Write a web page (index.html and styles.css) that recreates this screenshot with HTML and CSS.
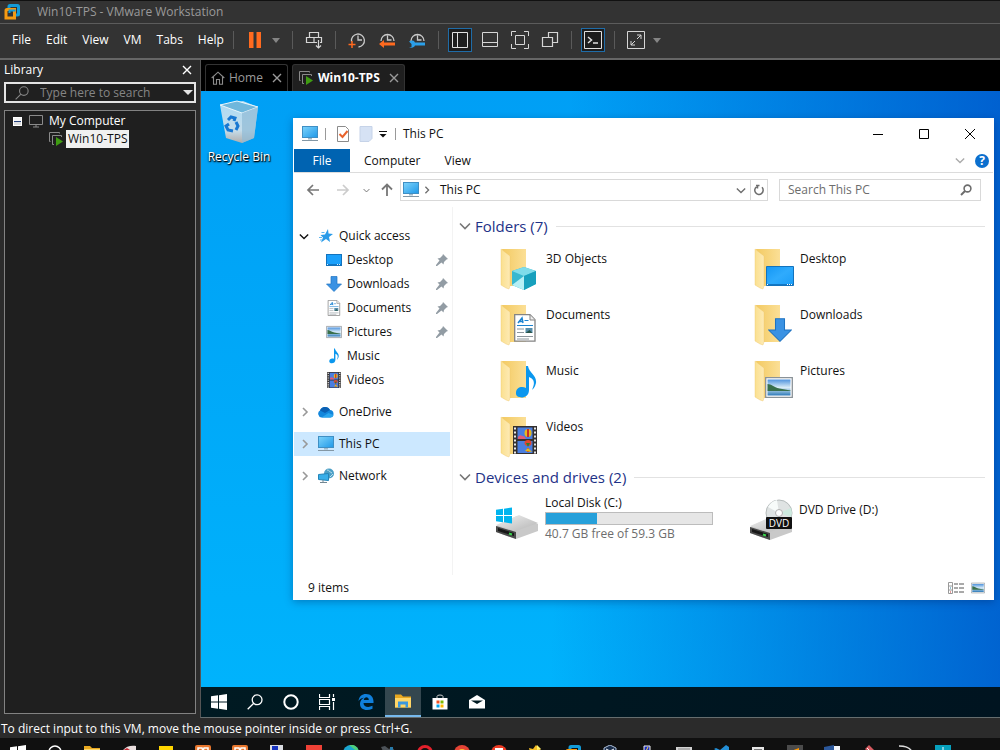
FILE: index.html
```
<!DOCTYPE html>
<html lang="en">
<head>
  <meta charset="UTF-8">
  <meta name="viewport" content="width=device-width, initial-scale=1.0">
  <title>Win10-TPS - VMware Workstation</title>
  <link rel="stylesheet" href="styles.css">
</head>
<body>
  <!-- shared icons -->
  <svg class="sprite" aria-hidden="true">
    <defs>
      <linearGradient id="gScreen" x1="0" y1="0" x2="1" y2="1"><stop offset="0" stop-color="#7fd4fb"/><stop offset="1" stop-color="#1f98e8"/></linearGradient>
      <linearGradient id="gDesk" x1="0" y1="0" x2="1" y2="1"><stop offset="0" stop-color="#1497f5"/><stop offset="0.5" stop-color="#2fabfd"/><stop offset="1" stop-color="#1a9df8"/></linearGradient>
      <linearGradient id="gFolder" x1="0" y1="0" x2="1" y2="0"><stop offset="0" stop-color="#f3ca62"/><stop offset="1" stop-color="#fbdf96"/></linearGradient>
      <linearGradient id="gFlap" x1="0" y1="0" x2="1" y2="0"><stop offset="0" stop-color="#fbe08f"/><stop offset="1" stop-color="#fdeab5"/></linearGradient>
      <linearGradient id="gPhoto" x1="0" y1="0" x2="0" y2="1"><stop offset="0" stop-color="#4f93dd"/><stop offset="0.5" stop-color="#d9ecf7"/><stop offset="1" stop-color="#2c79b8"/></linearGradient>
      <linearGradient id="gDrive" x1="0" y1="0" x2="1" y2="1"><stop offset="0" stop-color="#f2f2f2"/><stop offset="1" stop-color="#b4b4b4"/></linearGradient>
      <linearGradient id="gBin" x1="0" y1="0" x2="0" y2="1"><stop offset="0" stop-color="#b4ddf4"/><stop offset="0.7" stop-color="#cfe0ea"/><stop offset="1" stop-color="#b9aea8"/></linearGradient>
    </defs>
    <symbol id="pc" viewBox="0 0 16 16">
      <rect x="0.5" y="0.5" width="15" height="11" fill="url(#gScreen)" stroke="#3f8fc4"/>
      <path d="M6 12h4v1.500H6z" fill="#9fb8c8"/><path d="M0 14.500h16" stroke="#8397a5"/>
    </symbol>
    <symbol id="folder" viewBox="0 0 40 44">
      <path d="M2 2h24v37H10z" fill="url(#gFolder)"/>
      <path d="M1 2l9 7v30l-1 3-3-1-5-3z" fill="url(#gFlap)" stroke="#edc569" stroke-width="0.400"/>
    </symbol>
    <symbol id="desk" viewBox="0 0 16 12">
      <rect x="0.500" y="0.500" width="15" height="11" fill="#1ba0fb" stroke="#1373bd"/><path d="M1 10.500h14" stroke="#1277c4"/><path d="M1 10.500h1M11 10.500h1M13 10.500h1" stroke="#d8f0ff"/>
    </symbol>
    <symbol id="down" viewBox="0 0 16 16"><path d="M5 .5h6V8h4.500L8 15.500.5 8H5z" fill="#3a92e3" stroke="#1e73c2" stroke-width="0.700"/></symbol>
    <symbol id="doc" viewBox="0 0 22 28">
      <path d="M.7.7H16l5 5v21.500H.7z" fill="#fff" stroke="#848484" stroke-width="1.300"/><path d="M16 1v5h5" fill="#eee" stroke="#848484"/>
      <path d="M4 9l4-5 1 5M5 7.500h4" fill="none" stroke="#1d83d0" stroke-width="1.500"/><path d="M10.500 6.500h4" stroke="#1d83d0"/>
      <path d="M3 15h7M3 18.500h7M3 22.500h16M3 25h12" stroke="#8d969c"/><path d="M3 11.500h16" stroke="#1d83d0"/><path d="M11.500 14h7v5h-7z" fill="#568eab"/><path d="M11.500 19l4-3 3 3z" fill="#27544a"/>
    </symbol>
    <symbol id="photo" viewBox="0 0 28 21">
      <path d="M.7.7h26.600v19.600H.7z" fill="#fff" stroke="#8a9298" stroke-width="1.300"/><path d="M2.500 2.500h23v16h-23z" fill="url(#gPhoto)"/>
      <path d="M2.500 7c4 0 6 3 12 4.500l11 2v.5h-23z" fill="#396f4b"/>
    </symbol>
    <symbol id="note" viewBox="0 0 22 34"><path d="M11 1h2c1 7 9 9 8 17-1 4-2 5-4 7 4-9 1-11-3-13v13c0 10-14 9-13 3 0-6 6-7 10-5z" fill="#0b97ee"/></symbol>
    <symbol id="film" viewBox="0 0 24 28">
      <path d="M0 0h24v28H0z" fill="#34302f"/><path d="M2 1.500v26M22 1.500v26" stroke="#e9e9e9" stroke-width="2" stroke-dasharray="2 2"/>
      <path d="M4.500 1.500h15V13h-15zM4.500 15h15v12h-15z" fill="#4a7ee0"/><path d="M5 11c3-4 4 0 6-1l2 3H5z" fill="#de5c78"/>
      <ellipse cx="15" cy="7" rx="3.500" ry="4" fill="#e6b91c"/><path d="M14 3h2v8h-2zM14 22h2v4h-2z" fill="#c72d2b"/><ellipse cx="15" cy="17" rx="3.500" ry="3" fill="#e2452f"/><path d="M13 17h4l-2 4z" fill="#2c7d35"/><path d="M12 25l3-3 4 4z" fill="#e6b91c"/>
    </symbol>
    <symbol id="pin" viewBox="0 0 12 12"><path d="M7 0l5 5-1.500.5L8 8l-.5 2.500-2-2L1 12H0v-1l3.500-4.500-2-2L4 4l2.500-2.500z" fill="#929ca4"/></symbol>
    <symbol id="chevR" viewBox="0 0 8 10"><path d="M2 1l4 4-4 4" fill="none" stroke="currentColor" stroke-width="1.600"/></symbol>
    <symbol id="chevD" viewBox="0 0 12 8"><path d="M1 1.500l5 5 5-5" fill="none" stroke="currentColor" stroke-width="1.600"/></symbol>
    <symbol id="cross" viewBox="0 0 10 10"><path d="M1 1l8 8M9 1L1 9" fill="none" stroke="currentColor" stroke-width="1.400"/></symbol>
    <symbol id="vm" viewBox="0 0 16 16">
      <path d="M2.500 10.500h-1v-9h10v1M6 13.500H4.500v-9h9V6" fill="none" stroke="#8a8a8a"/><path d="M8 6l7 4.500L8 15z" fill="#3f9c12"/>
    </symbol>
    <symbol id="win" viewBox="0 0 16 16"><path d="M0 2.300l7-1v6.300H0zM8 1.200L16 0v7.600H8zM0 8.500h7v6.200l-7-1zM8 8.500h8V16l-8-1.200z" fill="currentColor"/></symbol>
    <symbol id="lens" viewBox="0 0 16 16"><path d="M6.500 9.500L.7 15.300M5.200 5.800a4.900 4.900 0 1 1 9.800 0 4.900 4.900 0 1 1-9.800 0" fill="none" stroke="currentColor" stroke-width="1.300"/></symbol>
    <symbol id="clock" viewBox="0 0 18 18"><path d="M3.500 10.500a6.500 6.500 0 1 1 7 5.500M10 4.500V9h4" fill="none" stroke="#c9c9c9" stroke-width="1.300"/></symbol>
    <symbol id="clockHalf" viewBox="0 0 18 18"><path d="M3 10a6.500 6.500 0 1 1 13 0M9.500 4.500V9h4" fill="none" stroke="#c9c9c9" stroke-width="1.300"/></symbol>
    <symbol id="vmware" viewBox="0 0 16 16"><path d="M5 4V2.500Q5 1.500 6 1.500h7.500q1 0 1 1V10q0 1-1 1H12" fill="none" stroke="#139bd7" stroke-width="3"/><path d="M3 5.500h7.500V14H2V6.500q0-1 1-1z" fill="none" stroke="#f59a12" stroke-width="3"/><path d="M5.500 9V6.500h6" fill="none" stroke="#139bd7" stroke-width="2"/></symbol>
    <symbol id="drive" viewBox="0 0 44 26">
      <path d="M1 12L22 2l21 8v7L21 25 1 18z" fill="#c9c9c9"/><path d="M1 11L24 1l19 8-22 8z" fill="url(#gDrive)"/><path d="M1 12l20 6v7L1 18z" fill="#4a4a4a"/><path d="M3 14l16 5v3L3 17z" fill="#171717"/><path d="M14 19.500l3 1" stroke="#39d34c" stroke-width="2"/>
    </symbol>
  </svg>

  <header class="titlebar">
    <svg class="i16"><use href="#vmware"/></svg>
    <span>Win10-TPS - VMware Workstation</span>
  </header>

  <div class="menubar">
    <nav class="menus">
      <button>File</button><button>Edit</button><button>View</button><button>VM</button><button>Tabs</button><button>Help</button>
    </nav>
    <span class="sep"></span>
    <button class="tool" aria-label="Suspend"><svg class="i18" viewBox="0 0 18 18"><path d="M3 1h4.500v16H3zM10.500 1H15v16h-4.500z" fill="#ff6a1f"/></svg></button>
    <button class="tool-arrow" aria-label="Power options"><span class="tri"></span></button>
    <span class="sep"></span>
    <button class="tool" aria-label="Send keys"><svg class="i18" viewBox="0 0 18 18"><path d="M4.500 6.500v-5h9v5M12 11.500H1.500v-5h15v5H15M9 6.500v5M13.500 9v8M11 14.500l2.500 2.500 2.500-2.500" fill="none" stroke="#d6d6d6" stroke-width="1.200"/></svg></button>
    <span class="sep"></span>
    <button class="tool" aria-label="Take snapshot"><svg class="i18" viewBox="0 0 18 18"><use href="#clock"/><path d="M4 10v7M.5 13.500h7" stroke="#ff6a1f" stroke-width="1.500"/></svg></button>
    <button class="tool" aria-label="Revert snapshot"><svg class="i18" viewBox="0 0 18 18"><use href="#clockHalf"/><path d="M1 13l5-4v2.500h11v3H6V17z" fill="#ff6a1f"/></svg></button>
    <button class="tool" aria-label="Manage snapshots"><svg class="i18" viewBox="0 0 18 18"><use href="#clockHalf"/><path d="M1 10.500c4-2 5-1 6 1h10v3H7c-1 2-3 3-6 1.500h2.500v-3z" fill="#2b9fe8"/></svg></button>
    <span class="sep"></span>
    <button class="tool on" aria-label="Show library"><svg class="i18" viewBox="0 0 18 18"><path d="M1.500 1.500h15v15h-15zM6.500 2v14" fill="none" stroke="#e0e0e0"/></svg></button>
    <button class="tool" aria-label="Show thumbnails"><svg class="i18" viewBox="0 0 18 18"><path d="M1.500 1.500h15v14h-15zM2 11.500h14" fill="none" stroke="#d6d6d6"/></svg></button>
    <button class="tool" aria-label="Full screen"><svg class="i18" viewBox="0 0 18 18"><path d="M.5 5V.5H5M13 .5h4.500V5M17.500 13v4.500H13M5 17.500H.5V13M4.500 4.500h9v9h-9z" fill="none" stroke="#d6d6d6"/></svg></button>
    <button class="tool" aria-label="Unity"><svg class="i18" viewBox="0 0 18 18"><path d="M7.500 6V1.500h9v10H12M1.500 6.500h10v9h-10z" fill="none" stroke="#d6d6d6" stroke-width="1.200"/></svg></button>
    <span class="sep"></span>
    <button class="tool on" aria-label="Console view"><svg class="i18" viewBox="0 0 18 18"><path d="M.5.5h17v17H.5z" fill="none" stroke="#e0e0e0"/><path d="M4 6l3.500 3L4 12M9 12h5" fill="none" stroke="#e0e0e0" stroke-width="1.500"/></svg></button>
    <span class="sep"></span>
    <button class="tool" aria-label="Stretch guest"><svg class="i18" viewBox="0 0 18 18"><path d="M.5.5h17v17H.5zM10 4h4v4M14 4l-4 4M8 14H4v-4M4 14l4-4" fill="none" stroke="#d6d6d6"/></svg></button>
    <button class="tool-arrow" aria-label="Stretch options"><span class="tri"></span></button>
  </div>

  <div class="workspace">
    <aside class="library">
      <div class="library-head">
        <span>Library</span>
        <button aria-label="Close library"><svg class="i10"><use href="#cross"/></svg></button>
      </div>
      <div class="library-search">
        <svg class="i14"><use href="#lens"/></svg>
        <input type="text" aria-label="Search library" placeholder="Type here to search">
        <button aria-label="Search options"><span class="tri"></span></button>
      </div>
      <div class="tree">
        <div class="tree-row">
          <button class="collapse" aria-label="Collapse"></button>
          <svg class="i14" viewBox="0 0 14 14"><path d="M.5 1.500h13v9H.5zM4 13h6M7 11v2" fill="none" stroke="#8b8b8b"/></svg>
          <span>My Computer</span>
        </div>
        <div class="tree-row child">
          <svg class="i16"><use href="#vm"/></svg>
          <a href="#" class="picked">Win10-TPS</a>
        </div>
      </div>
    </aside>

    <main class="console">
      <div class="tabs">
        <div class="tab">
          <svg class="i14" viewBox="0 0 14 14"><path d="M.7 7L7 1.200 13.300 7M2.500 6v7.300h3V8.500h3v4.800h3V6" fill="none" stroke="#8c8c8c" stroke-width="1.100"/></svg>
          <a href="#">Home</a>
          <button aria-label="Close Home"><svg class="i10"><use href="#cross"/></svg></button>
        </div>
        <div class="tab active">
          <svg class="i16"><use href="#vm"/></svg>
          <a href="#">Win10-TPS</a>
          <button aria-label="Close Win10-TPS"><svg class="i10"><use href="#cross"/></svg></button>
        </div>
      </div>

      <div class="desktop">
        <a href="#" class="bin">
          <svg class="bin-icon" viewBox="0 0 40 44">
            <path d="M1 5l6 33 16 5 12-5 4-31-15-6z" fill="url(#gBin)" opacity="0.950"/>
            <path d="M1 5l17-4 21 6-16 6z" fill="#6fb7dc" stroke="#e9f6fc"/><path d="M23 13v30l12-5 4-31z" fill="#90bad5" opacity="0.700"/>
            <path d="M9 20l3-3 4 1-1 3M17 22l2 4-2 4M14 31l-5-1-2-4 3-2" fill="none" stroke="#1878d2" stroke-width="3"/>
          </svg>
          <span>Recycle Bin</span>
        </a>

        <section class="explorer">
          <div class="ex-title">
            <svg class="i16"><use href="#pc"/></svg>
            <span class="rule"></span>
            <svg class="i16 qa-check" viewBox="0 0 16 16"><path d="M2.500.5h8l3 3v12h-11z" fill="#fff" stroke="#8b8b8b"/><path d="M4.500 8l3 3 5-6" fill="none" stroke="#e8622b" stroke-width="2"/></svg>
            <svg class="i16 qa-new" viewBox="0 0 16 16"><path d="M2 .5h12v12l-3 3H2z" fill="#d6e2f4" stroke="#c6d3e8"/></svg>
            <svg class="i10" viewBox="0 0 10 10"><path d="M1 2.500h8" stroke="#111"/><path d="M1.500 5h7L5 8.500z" fill="#111"/></svg>
            <span class="rule"></span>
            <span>This PC</span>
            <div class="win-buttons">
              <button aria-label="Minimize"><svg class="i10" viewBox="0 0 10 10"><path d="M0 5.500h10" stroke="#000"/></svg></button>
              <button aria-label="Maximize"><svg class="i10" viewBox="0 0 10 10"><path d="M.5.500h9v9h-9z" fill="none" stroke="#000"/></svg></button>
              <button aria-label="Close"><svg class="i10" viewBox="0 0 10 10"><path d="M0 0l10 10M10 0L0 10" stroke="#000"/></svg></button>
            </div>
          </div>
          <div class="ribbon">
            <button class="file">File</button>
            <button>Computer</button>
            <button>View</button>
            <div class="ribbon-end">
              <svg class="chev small faint"><use href="#chevD"/></svg>
              <button class="help" aria-label="Help">?</button>
            </div>
          </div>
          <div class="address-row">
            <button aria-label="Back"><svg class="i14" viewBox="0 0 14 14"><path d="M7 2L2 7l5 5M2 7h11" fill="none" stroke="#777" stroke-width="1.700"/></svg></button>
            <button aria-label="Forward"><svg class="i14" viewBox="0 0 14 14"><path d="M7 2l5 5-5 5M12 7H1" fill="none" stroke="#ccc" stroke-width="1.700"/></svg></button>
            <button class="recent" aria-label="Recent locations"><svg class="chev tiny"><use href="#chevD"/></svg></button>
            <button class="up" aria-label="Up"><svg class="i14" viewBox="0 0 14 14"><path d="M2 6.500l5-5 5 5M7 2v11" fill="none" stroke="#777" stroke-width="1.800"/></svg></button>
            <div class="address">
              <svg class="i16"><use href="#pc"/></svg>
              <svg class="chev-r crumb"><use href="#chevR"/></svg>
              <span>This PC</span>
              <button class="drop" aria-label="Previous locations"><svg class="chev small"><use href="#chevD"/></svg></button>
              <button class="reload" aria-label="Refresh"><svg class="i12" viewBox="0 0 12 12"><path d="M3.500 2.800a4.200 4.200 0 1 0 5.500 .5M4.500 1v3.500M3 1.500h3.500" fill="none" stroke="#6d6d6d" stroke-width="1.500"/></svg></button>
            </div>
            <div class="ex-search">
              <input type="text" aria-label="Search This PC" placeholder="Search This PC">
              <svg class="i12" viewBox="0 0 12 12"><path d="M5 7L1 11" stroke="#6d6d6d" stroke-width="2"/><circle cx="7.500" cy="4.500" r="3.400" fill="none" stroke="#6d6d6d" stroke-width="1.600"/></svg>
            </div>
          </div>

          <div class="ex-body">
            <nav class="places">
              <a href="#" class="top open"><svg class="chev small"><use href="#chevD"/></svg><svg class="i16" viewBox="0 0 16 16"><path d="M10 1l.5 4.500 4.500.5-4 3 1 5-4-3-5 3.500L5 9.500 2.500 7l4.500-.5z" fill="#2a9be8"/><path d="M1 9.500h3M2 12h2M3.500 4.500h3" stroke="#5db6ef"/></svg>Quick access</a>
              <a href="#" class="sub"><svg class="i16"><use href="#desk"/></svg>Desktop<svg class="i12 pin"><use href="#pin"/></svg></a>
              <a href="#" class="sub"><svg class="i16"><use href="#down"/></svg>Downloads<svg class="i12 pin"><use href="#pin"/></svg></a>
              <a href="#" class="sub"><svg class="i16"><use href="#doc"/></svg>Documents<svg class="i12 pin"><use href="#pin"/></svg></a>
              <a href="#" class="sub"><svg class="i16"><use href="#photo"/></svg>Pictures<svg class="i12 pin"><use href="#pin"/></svg></a>
              <a href="#" class="sub"><svg class="i16"><use href="#note"/></svg>Music</a>
              <a href="#" class="sub"><svg class="i16"><use href="#film"/></svg>Videos</a>
              <a href="#" class="top"><svg class="chev-r"><use href="#chevR"/></svg><svg class="i16" viewBox="0 0 16 16"><path d="M3.500 13.500A3.800 3.800 0 0 1 2 6.500 5.500 5.500 0 0 1 12 6a3.800 3.800 0 0 1 .5 7.500z" fill="#1286dc"/><path d="M2 6.500A5.500 5.500 0 0 1 12 6L7 9z" fill="#0b60b3"/><path d="M3.500 13.500l7-4.500 5 2a3 3 0 0 1-3 2.500z" fill="#2ba6ee"/></svg>OneDrive</a>
              <a href="#" class="top current"><svg class="chev-r"><use href="#chevR"/></svg><svg class="i16"><use href="#pc"/></svg>This PC</a>
              <a href="#" class="top"><svg class="chev-r"><use href="#chevR"/></svg><svg class="i16" viewBox="0 0 16 16"><circle cx="11" cy="5.500" r="5" fill="#4b9fc6"/><path d="M9 2c3 0 2 2 5 3M12 9l3-3" fill="none" stroke="#bde0ec"/><path d="M.5 6.500l10-1v7l-10-1z" fill="#37aee9" stroke="#2384b8"/><path d="M2 14.500h7M5 12v3" stroke="#728793"/></svg>Network</a>
            </nav>

            <div class="files">
              <h2><svg class="chev"><use href="#chevD"/></svg>Folders (7)</h2>
              <div class="grid">
                <a href="#" class="item"><svg class="big" viewBox="0 0 40 44"><use href="#folder"/><path d="M24 20l12 4v13l-12 6-12-5V24z" fill="#38b8cf"/><path d="M12 24l12-4 12 4-12 5z" fill="#7fdcea"/><path d="M24 29l12-5v13l-12 6z" fill="#17a0bd"/><path d="M12 38l12-9v14z" fill="#b5eff5"/></svg>3D Objects</a>
                <a href="#" class="item"><svg class="big" viewBox="0 0 40 44"><use href="#folder"/><path d="M12.500 19.500h27v19h-27z" fill="url(#gDesk)" stroke="#1373bd"/><path d="M13 37.500h26" stroke="#1277c4"/><path d="M13 37.500h1M33 37.500h1M35 37.500h1M37 37.500h1" stroke="#fff"/></svg>Desktop</a>
                <a href="#" class="item"><svg class="big" viewBox="0 0 40 44"><use href="#folder"/><use href="#doc" x="14" y="11" width="22" height="28"/></svg>Documents</a>
                <a href="#" class="item"><svg class="big" viewBox="0 0 40 44"><use href="#folder"/><use href="#down" x="14" y="15" width="24" height="24"/></svg>Downloads</a>
                <a href="#" class="item"><svg class="big" viewBox="0 0 40 44"><use href="#folder"/><use href="#note" x="15" y="6" width="22" height="34"/></svg>Music</a>
                <a href="#" class="item"><svg class="big" viewBox="0 0 40 44"><use href="#folder"/><use href="#photo" x="11" y="18" width="28" height="21"/></svg>Pictures</a>
                <a href="#" class="item"><svg class="big" viewBox="0 0 40 44"><use href="#folder"/><use href="#film" x="13" y="11" width="24" height="28"/></svg>Videos</a>
              </div>
              <h2><svg class="chev"><use href="#chevD"/></svg>Devices and drives (2)</h2>
              <div class="grid drives">
                <a href="#" class="item">
                  <svg class="drv" viewBox="0 0 44 44"><use href="#drive" x="0" y="16" width="44" height="26"/><use href="#win" x="1" y="9" width="16" height="17" color="#00b4ee"/></svg>
                  <span class="disk">
                    <span>Local Disk (C:)</span>
                    <progress value="31" max="100" aria-label="Space used"></progress>
                    <span class="space">40.7 GB free of 59.3 GB</span>
                  </span>
                </a>
                <a href="#" class="item dvd">
                  <svg class="drv" viewBox="0 0 44 44"><use href="#drive" x="0" y="16" width="44" height="26"/><circle cx="30" cy="14" r="13" fill="#dfe3e3" stroke="#b5bbbb"/><path d="M30 14L19 8a13 13 0 0 1 9-7z" fill="#f7fbfa"/><path d="M30 14l12-5a13 13 0 0 1 0 9z" fill="#cdeadf"/><circle cx="30" cy="14" r="3.500" fill="#fff" stroke="#b0b0b0"/><rect x="17" y="18" width="26" height="12" rx="1" fill="#111"/><text class="dvd-label" x="30" y="28" text-anchor="middle">DVD</text></svg>
                  <span>DVD Drive (D:)</span>
                </a>
              </div>
            </div>
          </div>

          <footer class="ex-status">
            <span>9 items</span>
            <button class="details" aria-label="Details view"><svg class="i16" viewBox="0 0 16 12"><path d="M.5.500h4v11h-4zM.5 4h4M.5 8h4" fill="none" stroke="#999"/><path d="M6 2h4M11 2h5M6 6h4M11 6h5M6 10h4M11 10h5" stroke="#555"/><path d="M2 6h1" stroke="#28a"/><path d="M2 10h1" stroke="#c33"/></svg></button>
            <button aria-label="Large icons view"><svg class="i14"><use href="#photo"/></svg></button>
          </footer>
        </section>
      </div>

      <div class="guest-bar">
        <button aria-label="Start"><svg class="i16"><use href="#win"/></svg></button>
        <button aria-label="Search"><svg class="i16"><use href="#lens"/></svg></button>
        <button aria-label="Cortana"><svg class="i16" viewBox="0 0 16 16"><circle cx="8" cy="8" r="6.700" fill="none" stroke="#fff" stroke-width="2"/></svg></button>
        <button aria-label="Task view"><svg class="i16" viewBox="0 0 16 16"><path d="M.5 0v3.500h10V0M.5 16v-3.500h10V16M.5 5.500h10v5H.5zM14.500 0v3M14.500 8v8" fill="none" stroke="#fff" stroke-width="1.200"/><path d="M13 4h3v3h-3z" fill="#fff"/></svg></button>
        <div class="pinned">
          <button aria-label="Edge"><svg class="i16" viewBox="0 0 16 16"><path d="M.5 7C1 2.500 4 0 8 0c5 0 7.500 3.500 7.500 7.500V9H5.500c0 4 5 5 9 2.800v3C8 17.500 2 15.500 2 10c0-3 1.500-5 4-6.200C3.500 4 1.700 5 .5 7zM5.800 6h5c0-3.800-4.700-3.500-5 0z" fill="#1080dc"/></svg></button>
          <button class="running" aria-label="File Explorer"><svg class="i16" viewBox="0 0 16 16"><path d="M0 1.500h6l2 2h8v11H0z" fill="#e8a820"/><path d="M0 5h16v9.500H0z" fill="#ffd667"/><path d="M3 8.500h10v6h-2.500v-3h-5v3H3z" fill="#3b97dd"/></svg></button>
          <button aria-label="Store"><svg class="i16" viewBox="0 0 16 16"><path d="M5 5V2.500Q5 1 8 1t3 1.500V5" fill="none" stroke="#ccc"/><path d="M.5 4h15v11.500H.5z" fill="#fff"/><path d="M4.500 6.500h3v3h-3z" fill="#f25022"/><path d="M8.500 6.500h3v3h-3z" fill="#7fba00"/><path d="M4.500 10.500h3v3h-3z" fill="#00a4ef"/><path d="M8.500 10.500h3v3h-3z" fill="#ffb900"/></svg></button>
          <button aria-label="Mail"><svg class="i16" viewBox="0 0 16 16"><path d="M0 6l8-5 8 5v8.500H0z" fill="#fff"/><path d="M2 6.500h12L8 10z" fill="#001a22"/></svg></button>
        </div>
      </div>
    </main>
  </div>

  <div class="statusbar">To direct input to this VM, move the mouse pointer inside or press Ctrl+G.</div>

  <!-- host taskbar, mostly below the edge of the screen -->
  <div class="host-bar">
    <svg class="i16"><use href="#win"/></svg>
    <svg class="i16" viewBox="0 0 16 16"><circle cx="8" cy="7" r="6" fill="none" stroke="#fff" stroke-width="1.500"/></svg>
    <svg class="i16" viewBox="0 0 16 16"><path d="M0 1h6l2 2h8v11H0z" fill="#e8a820"/><path d="M0 4h16v10H0z" fill="#ffd667"/></svg>
    <svg class="i16" viewBox="0 0 16 16"><path d="M1 7c2-5 8-7 14-6v8z" fill="#e9dede"/><path d="M1 6l5-3 3 2-4 3z" fill="#c62b35"/></svg>
    <svg class="i16" viewBox="0 0 16 16"><path d="M1 1h14v14H1z" fill="#ffd500"/></svg>
    <svg class="i16" viewBox="0 0 16 16"><rect width="16" height="16" rx="2" fill="#e8772e"/><path d="M3 8V3h4l1 3 1-3h4v5" fill="none" stroke="#fff" stroke-width="1.500"/></svg>
    <svg class="i16" viewBox="0 0 16 16"><rect width="16" height="16" rx="2" fill="#e8772e"/><path d="M3 8V3h4l1 3 1-3h4v5" fill="none" stroke="#fff" stroke-width="1.500"/></svg>
    <svg class="i16" viewBox="0 0 16 16"><path d="M1 0h13v9H1z" fill="#d9dce2"/><path d="M3 1h6v5H3z" fill="#1733bf"/></svg>
    <svg class="i16" viewBox="0 0 16 16"><path d="M0 0h16v16H0z" fill="#ef4136"/></svg>
    <svg class="i16" viewBox="0 0 16 16"><circle cx="8" cy="8" r="8" fill="#1ba5cf"/><path d="M6 0a8 8 0 0 1 10 8z" fill="#4fcf7a"/></svg>
    <svg class="i16" viewBox="0 0 16 16"><path d="M1 2l4-1 4 3 3-2 3 4H3z" fill="#4c5258"/><path d="M10 2h3v4h-3z" fill="#287aa9"/></svg>
    <svg class="i16" viewBox="0 0 16 16"><circle cx="8" cy="8" r="6.500" fill="none" stroke="#e3202b" stroke-width="3"/></svg>
    <svg class="i16" viewBox="0 0 16 16"><circle cx="8" cy="8" r="8" fill="#e44335"/><circle cx="8" cy="8" r="4" fill="#f7c331"/></svg>
    <svg class="i16" viewBox="0 0 16 16"><circle cx="8" cy="8" r="8" fill="#ee3b24"/><path d="M4 3h8v3H4z" fill="#fff"/></svg>
    <svg class="i16" viewBox="0 0 16 16"><path d="M1 3l4 1 3-4 7 7H2z" fill="#f4bd25"/><path d="M9 0l4 4-4 1z" fill="#fff16f"/></svg>
    <svg class="i16"><use href="#vmware"/></svg>
    <svg class="i16" viewBox="0 0 16 16"><path d="M2 3l6-3 6 3v8l-6 3-6-3z" fill="#1c2f4c" stroke="#aec0da"/><path d="M4 4l4 2 4-2" stroke="#fff" fill="none"/></svg>
    <svg class="i16" viewBox="0 0 16 16"><path d="M5 1h6v9H5z" fill="#182ac0" stroke="#eee"/><path d="M9 2L7 6" stroke="#ffdf33"/></svg>
    <svg class="i16" viewBox="0 0 16 16"><path d="M0 2h16v9H0z" fill="#d1d1d1"/><path d="M2 4h12" stroke="#888"/></svg>
    <svg class="i16" viewBox="0 0 16 16"><path d="M1 4l2-1 4 2 6-5 3 2v11L7 8z" fill="#238fd6"/></svg>
    <svg class="i16" viewBox="0 0 16 16"><path d="M2 2h12v11H2z" fill="#e6e6e6"/><path d="M4 4.500h8" stroke="#777"/></svg>
    <svg class="i16" viewBox="0 0 16 16"><path d="M0 0h16v16H0z" fill="#4b4b4b"/><path d="M4 6l8-3v4z" fill="#ff9800"/></svg>
    <svg class="i16" viewBox="0 0 16 16"><path d="M5 1h11v12H5z" fill="#f4f6fa"/><path d="M0 2l10-2v14H0z" fill="#2b579a"/></svg>
    <svg class="i16" viewBox="0 0 16 16"><path d="M4 4l4-4 5 5-4 4z" fill="#d55a60"/><path d="M6 3l4 4" stroke="#fff"/></svg>
    <svg class="i16" viewBox="0 0 16 16"><path d="M1 1c6 0 11 1 13 6" fill="none" stroke="#ddd" stroke-width="1.500"/></svg>
    <svg class="i16" viewBox="0 0 16 16"><path d="M0 0h16v16H0z" fill="#06a0bd"/><path d="M8 2v5" stroke="#fff"/></svg>
  </div>
</body>
</html>
```
FILE: styles.css
```
* {
  box-sizing: border-box;
}
body {
  font-family: "Open Sans", "Noto Sans", sans-serif;
  font-size: 12px;
  line-height: 16px;
  margin: 0;
  height: 100vh;
  overflow: hidden;
  display: flex;
  flex-direction: column;
  background-color: #2b2b2b;
  color: #fff;
}
button, input {
  font: inherit;
  color: inherit;
  background: none;
  border: 0;
  padding: 0;
  margin: 0;
}
button {
  display: flex;
  align-items: center;
  justify-content: center;
}
a {
  color: inherit;
  text-decoration: none;
}
svg {
  display: block;
  flex: none;
}
.sprite {
  position: absolute;
  width: 0;
  height: 0;
}
.i10 { width: 10px; height: 10px; }
.i12 { width: 12px; height: 12px; }
.i14 { width: 14px; height: 14px; }
.i16 { width: 16px; height: 16px; }
.i18 { width: 18px; height: 18px; }
.chev { width: 12px; height: 8px; }
.chev.small { width: 10px; height: 7px; }
.chev.tiny { width: 7px; height: 5px; }
.chev-r { width: 8px; height: 10px; }
.tri {
  border: 4px solid transparent;
  border-top: 5px solid #858585;
  border-bottom: 0;
}

/* VMware window */
.titlebar {
  display: flex;
  align-items: center;
  gap: 17px;
  height: 24px;
  padding-left: 4px;
  background-color: #333;
  border-top: 1px solid #111;
  border-bottom: 1px solid #5c5c5c;
  color: #9a9a9a;
}
.menubar {
  display: flex;
  align-items: center;
  gap: 6px;
  height: 36px;
  padding: 0 12px 2px;
  background-color: #333;
  border-bottom: 2px solid #666;
}
.menus {
  display: flex;
  gap: 15px;
  min-width: 212px;
}
.sep {
  width: 1px;
  height: 18px;
  margin: 0 3px;
  background-color: #5a5a5a;
}
.tool {
  width: 24px;
  height: 24px;
}
.tool.on {
  background-color: #1d1d1d;
  border: 1px solid #1f6ca8;
}
.tool-arrow {
  width: 10px;
  margin: 0 2px 0 -2px;
}
.workspace {
  flex: 1;
  min-height: 0;
  display: flex;
}
.library {
  width: 200px;
  padding: 0 4px 4px;
  display: flex;
  flex-direction: column;
}
.library-head {
  display: flex;
  justify-content: space-between;
  align-items: center;
  height: 22px;
  padding: 0 4px 2px 0;
}
.library-search {
  display: flex;
  align-items: center;
  height: 21px;
  border: 2px solid #e4e4e4;
  padding: 0 1px 0 9px;
  color: #858585;
  background-color: #202020;
}
.library-search input {
  flex: 1;
  min-width: 0;
  margin-left: 11px;
}
.library-search .tri {
  border-width: 5px 5px 0;
  border-top-color: #e4e4e4;
}
input::placeholder {
  color: inherit;
  opacity: 1;
}
.tree {
  flex: 1;
  margin-top: 7px;
  padding: 1px 0 0 8px;
  border: 1px solid #828282;
  background-color: #1f1f1f;
}
.tree-row {
  display: flex;
  align-items: center;
  height: 18px;
  gap: 6px;
}
.tree-row.child {
  padding-left: 35px;
  gap: 2px;
}
.collapse {
  width: 9px;
  height: 9px;
  margin-right: 1px;
  border: 1px solid #fff;
  background: linear-gradient(#f4f4f4 3px, #25427e 3px, #25427e 4px, #ddd 4px);
}
.picked {
  padding: 1px 2px;
  background-color: #f0f0f0;
  color: #111;
}
.console {
  flex: 1;
  min-width: 0;
  display: flex;
  flex-direction: column;
  border-left: 1px solid #555;
  border-bottom: 1px solid #656d6e;
}
.tabs {
  display: flex;
  gap: 4px;
  height: 31px;
  padding: 4px 4px 0;
  background-color: #000;
}
.tab {
  display: flex;
  align-items: center;
  gap: 4px;
  padding: 0 5px;
  border: 1px solid #333;
  border-bottom: 0;
  border-radius: 3px 3px 0 0;
  color: #9a9a9a;
}
.tab button {
  margin-left: 5px;
}
.tab.active {
  background-color: #1f1f1f;
}
.tab.active a {
  color: #fff;
  font-weight: bold;
}

/* guest desktop */
.desktop {
  flex: 1;
  min-height: 0;
  position: relative;
  background:
    linear-gradient(92deg, transparent 45%, rgba(0, 66, 190, 0.7) 100%),
    linear-gradient(#009ff5, #00b3fc);
}
.bin {
  position: absolute;
  left: 3px;
  top: 9px;
  width: 70px;
  display: flex;
  flex-direction: column;
  align-items: center;
  gap: 5px;
  white-space: nowrap;
  text-shadow: 1px 1px 1px #000, 0 1px 2px #000;
}
.bin-icon {
  width: 40px;
  height: 44px;
}
.explorer {
  position: absolute;
  left: 92px;
  top: 27px;
  right: 6px;
  bottom: 87px;
  display: flex;
  flex-direction: column;
  padding: 0 1px;
  background-color: #fff;
  color: #111;
  box-shadow: 0 2px 8px rgba(0, 30, 90, 0.35);
}
.ex-title {
  display: flex;
  align-items: center;
  gap: 7px;
  height: 31px;
  padding-left: 8px;
}
.qa-check {
  margin-left: 2px;
}
.qa-new {
  margin-right: -3px;
}
.rule {
  width: 1px;
  height: 12px;
  background-color: #999;
}
.win-buttons {
  display: flex;
  margin-left: auto;
}
.win-buttons button {
  width: 46px;
  height: 31px;
}
.ribbon {
  display: flex;
  height: 24px;
  border-bottom: 1px solid #dcdcdc;
}
.ribbon button {
  padding: 0 10px 0 14px;
}
.ribbon .file {
  width: 56px;
  padding: 0;
  background-color: #0063b1;
  color: #fff;
}
.ribbon-end {
  display: flex;
  align-items: center;
  gap: 10px;
  margin-left: auto;
  padding-right: 4px;
}
.faint {
  color: #aaa;
}
.ribbon .help {
  width: 14px;
  height: 14px;
  padding: 0;
  border-radius: 50%;
  background-color: #0b6fce;
  color: #fff;
  font-weight: bold;
}
.address-row {
  display: flex;
  align-items: center;
  height: 34px;
  padding: 0 12px;
  color: #6d6d6d;
}
.address-row > button {
  margin-right: 16px;
}
.address-row > .recent {
  margin-right: 10px;
  margin-left: -3px;
}
.address-row > .up {
  margin-right: 6px;
}
.address {
  flex: 1;
  display: flex;
  align-items: center;
  gap: 4px;
  height: 22px;
  padding-left: 2px;
  border: 1px solid #d9d9d9;
}
.address span {
  color: #111;
  margin-left: 5px;
}
.crumb {
  height: 8px;
}
.drop {
  margin-left: auto;
}
.reload {
  width: 17px;
  height: 20px;
  border-left: 1px solid #d9d9d9;
}
.ex-search {
  display: flex;
  align-items: center;
  width: 202px;
  height: 22px;
  margin-left: 11px;
  padding: 0 8px;
  border: 1px solid #d9d9d9;
}
.ex-search input {
  flex: 1;
  min-width: 0;
}
.ex-body {
  flex: 1;
  min-height: 0;
  display: flex;
}
.places {
  width: 159px;
  padding: 17px 2px 0 0;
  border-right: 1px solid #f3f3f3;
}
.places a {
  display: flex;
  align-items: center;
  height: 24px;
  gap: 5px;
}
.places .top {
  padding-left: 7px;
  margin-top: 8px;
}
.places .top .i16 {
  margin-left: 4px;
}
.places .chev-r {
  color: #999;
}
.places .open {
  margin-top: 0;
  padding-left: 5px;
}
.places .sub {
  padding-left: 32px;
}
.places .pin {
  margin-left: auto;
  margin-right: 2px;
}
.places .current {
  background-color: #cce8ff;
}
.files {
  flex: 1;
  min-width: 0;
  padding: 8px 8px 0 6px;
}
.files h2 {
  display: flex;
  align-items: center;
  gap: 4px;
  margin: 0;
  height: 22px;
  font-size: 15px;
  font-weight: normal;
  color: #1e3287;
}
.files h2 .chev {
  color: #777;
}
.files h2::after {
  content: "";
  flex: 1;
  height: 1px;
  margin-left: 4px;
  background-color: #e2e2e2;
}
.grid {
  display: grid;
  grid-template-columns: 254px 1fr;
  grid-auto-rows: 44px;
  row-gap: 12px;
  padding: 10px 0 7px 41px;
}
.item {
  display: flex;
  gap: 6px;
  padding-top: 4px;
}
.big {
  width: 40px;
  height: 44px;
  margin-top: -4px;
}
.drives {
  grid-auto-rows: 56px;
  padding: 3px 0 0 36px;
}
.drives .dvd {
  padding-top: 11px;
}
.drv {
  width: 44px;
  height: 44px;
  margin-top: 3px;
}
.dvd .drv {
  margin-top: -3px;
}
.disk {
  display: flex;
  flex-direction: column;
}
progress {
  appearance: none;
  flex: none;
  width: 168px;
  height: 13px;
  margin: 1px 0;
  border: 1px solid #bcbcbc;
  background-color: #e6e6e6;
}
progress::-webkit-progress-bar {
  background-color: #e6e6e6;
}
progress::-webkit-progress-value {
  background-color: #26a0da;
}
.space {
  color: #6d6d6d;
}
.dvd-label {
  fill: #fff;
  font-size: 10px;
}
.ex-status {
  display: flex;
  align-items: center;
  height: 25px;
  padding: 0 8px 0 14px;
}
.details {
  margin-left: auto;
  margin-right: 7px;
}

/* guest taskbar */
.guest-bar {
  display: flex;
  height: 30px;
  background: linear-gradient(90deg, #001a22, #001420);
}
.guest-bar button {
  width: 36px;
  padding-bottom: 1px;
}
.pinned {
  display: flex;
  gap: 1px;
  margin-left: 3px;
}
.guest-bar .running {
  background-color: #34474f;
  border-bottom: 2px solid #76b9ed;
  padding: 0;
}

.statusbar {
  height: 20px;
  padding: 3px 1px 1px;
}
.host-bar {
  display: flex;
  height: 12px;
  overflow: hidden;
  padding: 7px 10px 0;
  gap: 21px;
  background-color: #101010;
}
```
